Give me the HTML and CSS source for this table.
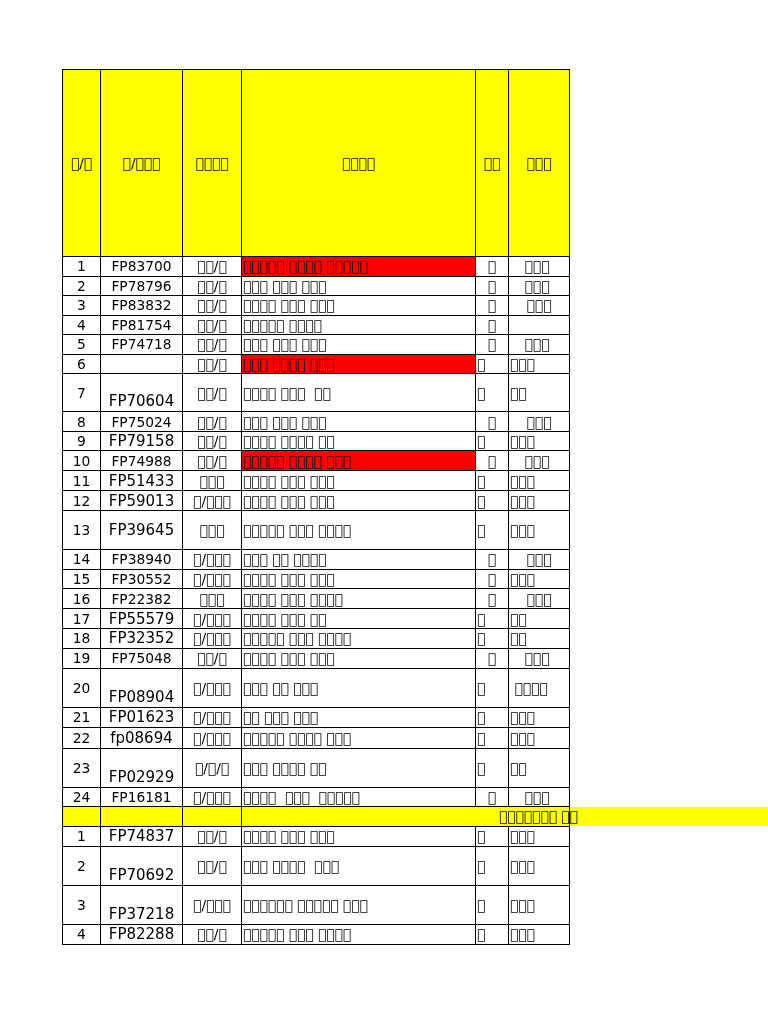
FILE: index.html
```html
<!DOCTYPE html>
<html lang="und">
<head>
<meta charset="utf-8">
<title>FP</title>
<link rel="stylesheet" href="styles.css">
</head>
<body>
<div class="page">
<table class="sheet">
<colgroup><col class="w1"><col class="w2"><col class="w3"><col class="w4"><col class="w5"><col class="w6"></colgroup>
<thead>
<tr><th>&#xE001;/&#xE002;</th><th>&#xE003;/&#xE004;&#xE005;&#xE006;</th><th>&#xE007;&#xE008;&#xE009;&#xE00A;</th><th>&#xE00B;&#xE00C;&#xE00D;&#xE00E;</th><th>&#xE00F;&#xE010;</th><th>&#xE011;&#xE012;&#xE013;</th></tr>
</thead>
<tbody>
<tr><td>1</td><td>FP83700</td><td>&#xE020;&#xE021;/&#xE022;</td><td class="name red">&#xE030;&#xE031;&#xE032;&#xE033;&#xE034; &#xE035;&#xE036;&#xE037;&#xE038; &#xE039;&#xE03A;&#xE03B;&#xE03C;&#xE03D;</td><td>&#xE040;</td><td class="cs">&#xE041;&#xE042;&#xE043;</td></tr>
<tr><td>2</td><td>FP78796</td><td>&#xE020;&#xE021;/&#xE022;</td><td class="name">&#xE030;&#xE031;&#xE032; &#xE033;&#xE034;&#xE035; &#xE036;&#xE037;&#xE038;</td><td>&#xE040;</td><td class="cs">&#xE041;&#xE042;&#xE043;</td></tr>
<tr><td>3</td><td>FP83832</td><td>&#xE020;&#xE021;/&#xE022;</td><td class="name">&#xE030;&#xE031;&#xE032;&#xE033; &#xE034;&#xE035;&#xE036; &#xE037;&#xE038;&#xE039;</td><td>&#xE040;</td><td>&#xE041;&#xE042;&#xE043;</td></tr>
<tr><td>4</td><td>FP81754</td><td>&#xE020;&#xE021;/&#xE022;</td><td class="name">&#xE030;&#xE031;&#xE032;&#xE033;&#xE034; &#xE035;&#xE036;&#xE037;&#xE038;</td><td>&#xE040;</td><td></td></tr>
<tr><td>5</td><td>FP74718</td><td>&#xE020;&#xE021;/&#xE022;</td><td class="name">&#xE030;&#xE031;&#xE032; &#xE033;&#xE034;&#xE035; &#xE036;&#xE037;&#xE038;</td><td>&#xE040;</td><td class="cs">&#xE041;&#xE042;&#xE043;</td></tr>
<tr><td>6</td><td></td><td>&#xE020;&#xE021;/&#xE022;</td><td class="name red">&#xE030;&#xE031;&#xE032; &#xE033;&#xE034;&#xE035;&#xE036; &#xE037;&#xE038;&#xE039;</td><td class="l">&#xE040;</td><td class="l">&#xE041;&#xE042;&#xE043;</td></tr>
<tr class="t7"><td>7</td><td class="big bot">FP70604</td><td>&#xE020;&#xE021;/&#xE022;</td><td class="name">&#xE030;&#xE031;&#xE032;&#xE033; &#xE034;&#xE035;&#xE036;  &#xE037;&#xE038;</td><td class="l">&#xE040;</td><td class="l">&#xE044;&#xE045;</td></tr>
<tr><td>8</td><td>FP75024</td><td>&#xE020;&#xE021;/&#xE022;</td><td class="name">&#xE030;&#xE031;&#xE032; &#xE033;&#xE034;&#xE035; &#xE036;&#xE037;&#xE038;</td><td>&#xE040;</td><td>&#xE041;&#xE042;&#xE043;</td></tr>
<tr><td>9</td><td class="big">FP79158</td><td>&#xE020;&#xE021;/&#xE022;</td><td class="name">&#xE030;&#xE031;&#xE032;&#xE033; &#xE034;&#xE035;&#xE036;&#xE037; &#xE038;&#xE039;</td><td class="l">&#xE040;</td><td class="l">&#xE041;&#xE042;&#xE043;</td></tr>
<tr><td>10</td><td>FP74988</td><td>&#xE020;&#xE021;/&#xE022;</td><td class="name red">&#xE030;&#xE031;&#xE032;&#xE033;&#xE034; &#xE035;&#xE036;&#xE037;&#xE038; &#xE039;&#xE03A;&#xE03B;</td><td>&#xE040;</td><td class="cs">&#xE041;&#xE042;&#xE043;</td></tr>
<tr class="x"><td>11</td><td class="big">FP51433</td><td>&#xE023;&#xE024;&#xE025;</td><td class="name">&#xE030;&#xE031;&#xE032;&#xE033; &#xE034;&#xE035;&#xE036; &#xE037;&#xE038;&#xE039;</td><td class="l">&#xE040;</td><td class="l">&#xE041;&#xE042;&#xE043;</td></tr>
<tr><td>12</td><td class="big">FP59013</td><td>&#xE026;/&#xE027;&#xE028;&#xE029;</td><td class="name">&#xE030;&#xE031;&#xE032;&#xE033; &#xE034;&#xE035;&#xE036; &#xE037;&#xE038;&#xE039;</td><td class="l">&#xE040;</td><td class="l">&#xE041;&#xE042;&#xE043;</td></tr>
<tr class="t"><td>13</td><td class="big">FP39645</td><td>&#xE023;&#xE024;&#xE025;</td><td class="name">&#xE030;&#xE031;&#xE032;&#xE033;&#xE034; &#xE035;&#xE036;&#xE037; &#xE038;&#xE039;&#xE03A;&#xE03B;</td><td class="l">&#xE040;</td><td class="l">&#xE041;&#xE042;&#xE043;</td></tr>
<tr class="m"><td>14</td><td>FP38940</td><td>&#xE026;/&#xE027;&#xE028;&#xE029;</td><td class="name">&#xE030;&#xE031;&#xE032; &#xE033;&#xE034; &#xE035;&#xE036;&#xE037;&#xE038;</td><td>&#xE040;</td><td>&#xE041;&#xE042;&#xE043;</td></tr>
<tr class="m"><td>15</td><td>FP30552</td><td>&#xE026;/&#xE027;&#xE028;&#xE029;</td><td class="name">&#xE030;&#xE031;&#xE032;&#xE033; &#xE034;&#xE035;&#xE036; &#xE037;&#xE038;&#xE039;</td><td>&#xE040;</td><td class="l">&#xE041;&#xE042;&#xE043;</td></tr>
<tr class="m"><td>16</td><td>FP22382</td><td>&#xE023;&#xE024;&#xE025;</td><td class="name">&#xE030;&#xE031;&#xE032;&#xE033; &#xE034;&#xE035;&#xE036; &#xE037;&#xE038;&#xE039;&#xE03A;</td><td>&#xE040;</td><td>&#xE041;&#xE042;&#xE043;</td></tr>
<tr class="m"><td>17</td><td class="big">FP55579</td><td>&#xE026;/&#xE027;&#xE028;&#xE029;</td><td class="name">&#xE030;&#xE031;&#xE032;&#xE033; &#xE034;&#xE035;&#xE036; &#xE037;&#xE038;</td><td class="l">&#xE040;</td><td class="l">&#xE044;&#xE045;</td></tr>
<tr class="m"><td>18</td><td class="big">FP32352</td><td>&#xE026;/&#xE027;&#xE028;&#xE029;</td><td class="name">&#xE030;&#xE031;&#xE032;&#xE033;&#xE034; &#xE035;&#xE036;&#xE037; &#xE038;&#xE039;&#xE03A;&#xE03B;</td><td class="l">&#xE040;</td><td class="l">&#xE044;&#xE045;</td></tr>
<tr class="m"><td>19</td><td>FP75048</td><td>&#xE020;&#xE021;/&#xE022;</td><td class="name">&#xE030;&#xE031;&#xE032;&#xE033; &#xE034;&#xE035;&#xE036; &#xE037;&#xE038;&#xE039;</td><td>&#xE040;</td><td class="cs">&#xE041;&#xE042;&#xE043;</td></tr>
<tr class="t"><td>20</td><td class="big bot">FP08904</td><td>&#xE026;/&#xE027;&#xE028;&#xE029;</td><td class="name">&#xE030;&#xE031;&#xE032; &#xE033;&#xE034; &#xE035;&#xE036;&#xE037;</td><td class="l">&#xE040;</td><td class="c4">&#xE046;&#xE047;&#xE048;&#xE049;</td></tr>
<tr class="x"><td>21</td><td class="big">FP01623</td><td>&#xE026;/&#xE027;&#xE028;&#xE029;</td><td class="name">&#xE030;&#xE031; &#xE032;&#xE033;&#xE034; &#xE035;&#xE036;&#xE037;</td><td class="l">&#xE040;</td><td class="l">&#xE041;&#xE042;&#xE043;</td></tr>
<tr class="x"><td>22</td><td class="big">fp08694</td><td>&#xE026;/&#xE027;&#xE028;&#xE029;</td><td class="name">&#xE030;&#xE031;&#xE032;&#xE033;&#xE034; &#xE035;&#xE036;&#xE037;&#xE038; &#xE039;&#xE03A;&#xE03B;</td><td class="l">&#xE040;</td><td class="l">&#xE041;&#xE042;&#xE043;</td></tr>
<tr class="t"><td>23</td><td class="big bot">FP02929</td><td>&#xE026;/&#xE02A;/&#xE022;</td><td class="name">&#xE030;&#xE031;&#xE032; &#xE033;&#xE034;&#xE035;&#xE036; &#xE037;&#xE038;</td><td class="l">&#xE040;</td><td class="l">&#xE044;&#xE045;</td></tr>
<tr><td>24</td><td>FP16181</td><td>&#xE026;/&#xE027;&#xE028;&#xE029;</td><td class="name">&#xE030;&#xE031;&#xE032;&#xE033;  &#xE034;&#xE035;&#xE036;  &#xE037;&#xE038;&#xE039;&#xE03A;&#xE03B;</td><td>&#xE040;</td><td class="cs">&#xE041;&#xE042;&#xE043;</td></tr>
<tr class="sect"><td></td><td></td><td></td><td colspan="3" class="title">&#xE050;&#xE051;&#xE052;&#xE053;&#xE054;&#xE055;&#xE056; &#xE057;&#xE058;</td></tr>
<tr class="x"><td>1</td><td class="big">FP74837</td><td>&#xE020;&#xE021;/&#xE022;</td><td class="name">&#xE030;&#xE031;&#xE032;&#xE033; &#xE034;&#xE035;&#xE036; &#xE037;&#xE038;&#xE039;</td><td class="l">&#xE040;</td><td class="l">&#xE041;&#xE042;&#xE043;</td></tr>
<tr class="t"><td>2</td><td class="big bot">FP70692</td><td>&#xE020;&#xE021;/&#xE022;</td><td class="name">&#xE030;&#xE031;&#xE032; &#xE033;&#xE034;&#xE035;&#xE036;  &#xE037;&#xE038;&#xE039;</td><td class="l">&#xE040;</td><td class="l">&#xE041;&#xE042;&#xE043;</td></tr>
<tr class="t"><td>3</td><td class="big bot">FP37218</td><td>&#xE026;/&#xE027;&#xE028;&#xE029;</td><td class="name">&#xE030;&#xE031;&#xE032;&#xE033;&#xE034;&#xE035; &#xE036;&#xE037;&#xE038;&#xE039;&#xE03A; &#xE03B;&#xE03C;&#xE03D;</td><td class="l">&#xE040;</td><td class="l">&#xE041;&#xE042;&#xE043;</td></tr>
<tr><td>4</td><td class="big">FP82288</td><td>&#xE020;&#xE021;/&#xE022;</td><td class="name">&#xE030;&#xE031;&#xE032;&#xE033;&#xE034; &#xE035;&#xE036;&#xE037; &#xE038;&#xE039;&#xE03A;&#xE03B;</td><td class="l">&#xE040;</td><td class="l">&#xE041;&#xE042;&#xE043;</td></tr>
</tbody>
</table>
</div>
</body>
</html>
```

FILE: styles.css
```css
* {
  box-sizing: border-box;
}

html,
body {
  margin: 0;
  background: #ffffff;
}

body {
  font-family: "DejaVu Sans", sans-serif;
  font-size: 13.8px;
  color: #000000;
}

.page {
  padding: 69px 0 0 62px;
}

.sheet {
  border-collapse: collapse;
  table-layout: fixed;
  width: 507px;
  will-change: transform;
}

.sheet th,
.sheet td {
  border: 1px solid #000000;
  padding: 0 1px;
  white-space: nowrap;
  overflow: hidden;
  text-align: center;
  vertical-align: middle;
  font-weight: normal;
  line-height: 16px;
}

.w1 { width: 38px; }
.w2 { width: 82px; }
.w3 { width: 59px; }
.w4 { width: 234px; }
.w5 { width: 33px; }
.w6 { width: 61px; }

.sheet thead tr {
  height: 187px;
}

.sheet thead th {
  background: #ffff00;
}

.sheet tbody tr {
  height: 19.5px;
}

.sheet tbody tr.m {
  height: 19.8px;
}

.sheet tbody tr.x {
  height: 20.5px;
}

.sheet tbody tr.t {
  height: 39px;
}

.sheet tbody tr.t7 {
  height: 38.4px;
}

.sheet .big {
  font-size: 15px;
}

.sheet .bot {
  vertical-align: bottom;
  padding-bottom: 2px;
}

.sheet .name {
  text-align: left;
  white-space: pre;
}

.sheet .red {
  background: #ff0000;
}

.sheet .l {
  text-align: left;
  padding-left: 1px;
}

.sheet .cs {
  padding-right: 5px;
}

.sheet .c4 {
  padding-right: 17px;
}

.sheet .sect td {
  background: #ffff00;
}

.sheet .sect .title {
  text-align: left;
  padding-left: 257px;
  overflow: visible;
  box-shadow: 199px 0 0 #ffff00;
}
```
